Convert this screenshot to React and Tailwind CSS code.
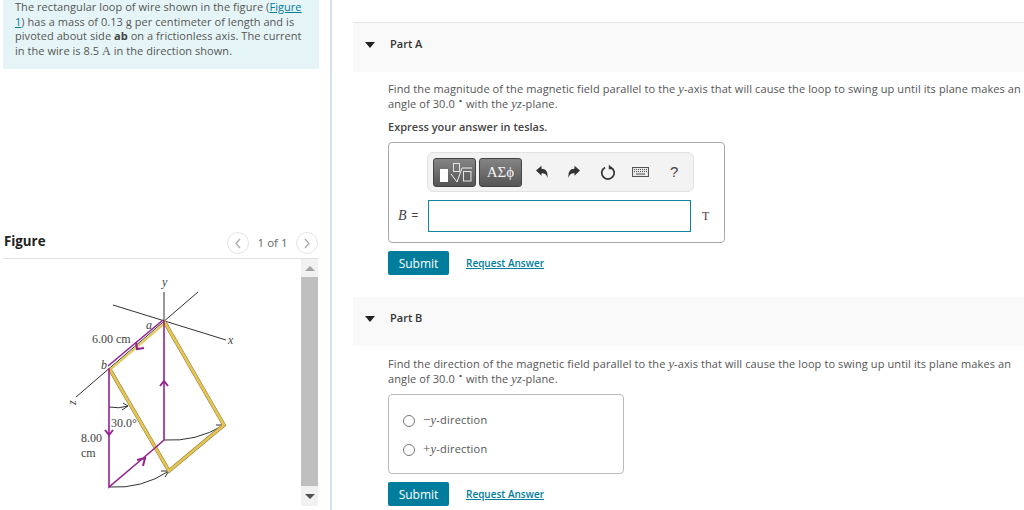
const serif = { fontFamily: '"Liberation Serif", serif' };

function Var({ children }) {
  return <i className="font-['Liberation_Serif',serif] text-[12.5px] leading-none">{children}</i>;
}

function Figure() {
  const purple = "#93248f";
  const yellow = "#e6c552";
  const ink = "#333333";
  return (
    <svg width="300" height="247" viewBox="3 260 300 247" className="block">
      <g fill="none" stroke={ink} strokeWidth="1">
        <path d="M164 293V322" />
        <path d="M198 293L76 398" />
        <path d="M113 306L226 341" />
        <path d="M109 408Q119 410 128 407" />
        <path d="M123 404L128 407L122 411" />
        <path d="M164 441Q196 443 224 426" />
        <path d="M216 426L224 426L219 432" />
        <path d="M109 488Q142 490 169 472" />
        <path d="M161 472L169 472L165 478" />
      </g>
      <path d="M164 322L224 426L169 472L109 369" fill="none" stroke="#8a7a40" strokeWidth="3.6" />
      <path d="M164 322L224 426L169 472L109 369" fill="none" stroke={yellow} strokeWidth="2.6" />
      <path d="M165 324L111 370" fill="none" stroke={yellow} strokeWidth="2.2" />
      <g fill="none" stroke={purple} strokeWidth="1.6">
        <path d="M163 321L108 367" />
        <path d="M109 369V488L155 449" />
        <path d="M155 449L164 441V322" />
        <path d="M136 343L137 350L144 349" strokeWidth="2" />
        <path d="M160 387L164 382L168 387" strokeWidth="2" />
        <path d="M105 431L109 436L113 431" strokeWidth="2" />
        <path d="M137 461L145 459L143 467" strokeWidth="2" />
      </g>
      <g fontSize="12" fill="#444444" style={serif}>
        <text x="162" y="287" fontStyle="italic">y</text>
        <text x="228" y="345" fontStyle="italic">x</text>
        <text x="146" y="330" fontStyle="italic">a</text>
        <text x="101" y="370" fontStyle="italic">b</text>
        <text x="76" y="406" fontStyle="italic" transform="rotate(-90 76 406)">z</text>
        <text x="92" y="344">6.00 cm</text>
        <text x="111" y="428">30.0°</text>
        <text x="81" y="443">8.00</text>
        <text x="81" y="458">cm</text>
      </g>
    </svg>
  );
}

function MathTools() {
  return (
    <div className="w-[267px] h-[40px] border border-[#e2e2e2] rounded-md bg-[#f3f3f3] flex items-center pl-[5px]">
      <div className="w-[43px] h-[29px] rounded-[3px] border border-[#444] bg-gradient-to-b from-[#858585] to-[#555] flex items-center justify-center">
        <svg width="39" height="25" viewBox="0 0 39 25">
          <rect x="5" y="9" width="8" height="13" fill="#ffffff" />
          <rect x="18.5" y="3.5" width="6" height="8" fill="none" stroke="#e5e5e5" />
          <rect x="28.5" y="11.5" width="7.5" height="9.5" fill="none" stroke="#e5e5e5" />
          <path d="M16 14L22 22L27 8H37" fill="none" stroke="#f0f0f0" strokeWidth="1" />
        </svg>
      </div>
      <div className="ml-[3px] w-[43px] h-[29px] rounded-[3px] border border-[#444] bg-gradient-to-b from-[#858585] to-[#555] flex items-center justify-center text-[#f4f4f4] text-[15px] font-['Liberation_Serif',serif]">
        ΑΣϕ
      </div>
      <svg className="ml-[13px]" width="14" height="14" viewBox="0 0 14 14" fill="#333">
        <path d="M1 5.5L6.5 0.8V3.7C11 3.7 13 6.5 12.5 13C11.5 9.6 10 8.2 6.5 8.2V10.8Z" />
      </svg>
      <svg className="ml-[18px]" width="14" height="14" viewBox="0 0 14 14" fill="#333">
        <path d="M13 5.5L7.5 0.8V3.7C3 3.7 1 6.5 1.5 13C2.5 9.6 4 8.2 7.5 8.2V10.8Z" />
      </svg>
      <svg className="ml-[19px]" width="16" height="16" viewBox="0 0 16 16" fill="none" stroke="#333" strokeWidth="1.7">
        <path d="M10.5 3.2A6.2 6.2 0 1 1 5 3.4" />
        <path d="M8.8 0.5V5.2H13.2" fill="#333" stroke="none" />
      </svg>
      <svg className="ml-[16px]" width="17" height="10" viewBox="0 0 17 10">
        <rect x="0.5" y="0.5" width="16" height="9" fill="#e8e8e8" stroke="#555" />
        <path d="M2 2.5H15M2 4.5H15" stroke="#555" strokeDasharray="1 1" />
        <path d="M4 7H13" stroke="#555" />
      </svg>
      <span className="ml-[21px] text-[15px] text-[#444] font-['Liberation_Sans',sans-serif]">?</span>
    </div>
  );
}

function Actions() {
  return (
    <div className="flex items-center gap-[17px]">
      <button className="w-[61px] h-[24px] rounded-[2px] bg-[#007c9c] text-white text-[12px] leading-none pt-[1px]">Submit</button>
      <a className="text-[10px] font-semibold text-[#007c9c] underline">Request Answer</a>
    </div>
  );
}

function PartHeader({ title, className }) {
  return (
    <div className={`bg-[#f9f9f9] flex items-center pl-[12px] text-[#333] ${className}`}>
      <span className="w-0 h-0 border-x-[5px] border-x-transparent border-t-[6px] border-t-[#222]" />
      <span className="ml-[15px] text-[11px] font-semibold">{title}</span>
    </div>
  );
}

function Radio({ children }) {
  return (
    <div className="flex items-center h-[29px]">
      <span className="w-[12px] h-[12px] rounded-full border border-[#777] bg-white" />
      <span className="ml-[8px] text-[11px] tracking-[0.2px]">{children}</span>
    </div>
  );
}

export default function App() {
  return (
    <div className="w-[1024px] h-[510px] overflow-hidden bg-white flex text-[#555] font-['Open_Sans',sans-serif] text-[11px]">
      <div className="w-[332px] h-full shrink-0 border-r-2 border-r-[#d5e3f0] pl-[3px] pr-[11px] flex flex-col">
        <div className="h-[69px] bg-[#e5f5f7] pl-[12px] pr-[12px] leading-[14.6px] tracking-[0.05px] text-[#555]">
          <p>
            The rectangular loop of wire shown in the figure (<a className="text-[#007c9c] underline">Figure 1</a>) has a mass of 0.13 <span className="font-['Liberation_Serif',serif] text-[12px] leading-none">g</span> per centimeter of length and is pivoted about side <b className="font-bold text-[#444]">ab</b> on a frictionless axis. The current in the wire is 8.5 <span className="font-['Liberation_Serif',serif] text-[12px] leading-none">A</span> in the direction shown.
          </p>
        </div>
        <div className="mt-[162px] h-[28px] flex items-center border-b border-b-[#e0e0e0] w-[315px]">
          <h2 className="ml-[1px] mb-[6px] text-[13.3px] font-bold text-[#222] flex-1">Figure</h2>
          <div className="flex items-center text-[#666] text-[11.5px] mb-[3px]">
            <span className="w-[22px] h-[22px] rounded-full border border-[#e5e5e5] flex items-center justify-center text-[#aaa]">
              <svg width="8" height="11" viewBox="0 0 8 11" fill="none" stroke="#aaa" strokeWidth="1.3"><path d="M6 1L2 5.5L6 10" /></svg>
            </span>
            <span className="mx-[8.5px]">1 of 1</span>
            <span className="w-[22px] h-[22px] rounded-full border border-[#e5e5e5] flex items-center justify-center">
              <svg width="8" height="11" viewBox="0 0 8 11" fill="none" stroke="#aaa" strokeWidth="1.3"><path d="M2 1L6 5.5L2 10" /></svg>
            </span>
          </div>
        </div>
        <div className="h-[247px] w-[315px] flex">
          <Figure />
          <div className="w-[17px] ml-[-2px] h-full bg-[#f1f1f1] flex flex-col items-center justify-between shrink-0">
            <div className="h-[18px] flex items-center">
              <span className="w-0 h-0 border-x-[5px] border-x-transparent border-b-[5px] border-b-[#a3a3a3]" />
            </div>
            <div className="w-full flex-1 bg-[#bfbfbf]" />
            <div className="h-[20px] flex items-center">
              <span className="w-0 h-0 border-x-[5px] border-x-transparent border-t-[5px] border-t-[#505050]" />
            </div>
          </div>
        </div>
      </div>

      <div className="flex-1 pl-[21px] pt-[22px]">
        <PartHeader title="Part A" className="h-[50px] border-t border-t-[#e6e6e6] pb-[6px]" />
        <div className="pl-[35px]">
          <p className="mt-[9px] leading-[15px] w-[640px] whitespace-nowrap tracking-[0.1px]">
            Find the magnitude of the magnetic field parallel to the <Var>y</Var>-axis that will cause the loop to swing up until its plane makes an
            <br />
            angle of 30.0 <sup className="text-[8px] leading-none">∘</sup> with the <Var>yz</Var>-plane.
          </p>
          <p className="mt-[8px] font-semibold text-[#444] leading-[15px]">Express your answer in teslas.</p>
          <div className="mt-[8px] w-[337px] h-[101px] border border-[#aaa] rounded-[4px] pl-[38px] pt-[9px] relative">
            <MathTools />
            <div className="mt-[8px] flex items-center">
              <div className="ml-[1px] w-[263px] h-[32px] border border-[#0f859f] bg-white" />
              <span className="ml-[11px] text-[12px] text-[#444] font-['Liberation_Serif',serif]">T</span>
            </div>
            <span className="absolute left-[9px] top-[64px] text-[12px] text-[#444] flex items-center gap-[5px]"><i className="font-['Liberation_Serif',serif] text-[14px] leading-none">B</i> =</span>
          </div>
          <div className="mt-[8px]"><Actions /></div>
        </div>

        <PartHeader title="Part B" className="h-[49px] mt-[22px] pb-[6px]" />
        <div className="pl-[35px]">
          <p className="mt-[10px] leading-[15px] w-[640px] whitespace-nowrap tracking-[0.1px]">
            Find the direction of the magnetic field parallel to the <Var>y</Var>-axis that will cause the loop to swing up until its plane makes an
            <br />
            angle of 30.0 <sup className="text-[8px] leading-none">∘</sup> with the <Var>yz</Var>-plane.
          </p>
          <div className="mt-[8px] w-[236px] h-[80px] border border-[#bbb] rounded-[4px] pl-[14px] pt-[11px]">
            <Radio><span className="font-['Liberation_Serif',serif] text-[13px] leading-none">−</span><Var>y</Var>-direction</Radio>
            <Radio><span className="font-['Liberation_Serif',serif] text-[13px] leading-none">+</span><Var>y</Var>-direction</Radio>
          </div>
          <div className="mt-[8px]"><Actions /></div>
        </div>
      </div>
    </div>
  );
}
